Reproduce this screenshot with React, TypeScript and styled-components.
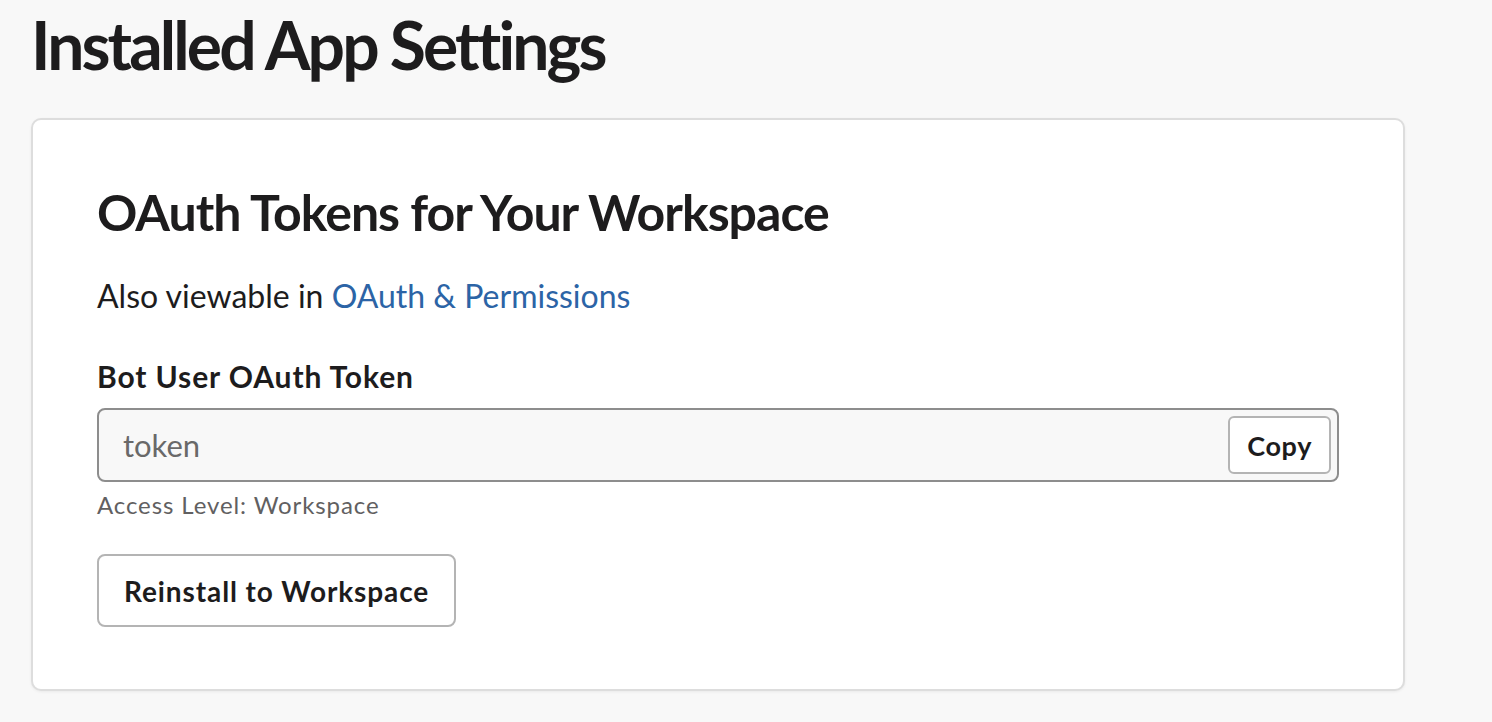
import { FC } from "react";
import styled, { createGlobalStyle } from "styled-components";

const GlobalStyle = createGlobalStyle`
  html, body {
    margin: 0;
    padding: 0;
    background: #f8f8f8;
    font-family: Lato, "Noto Sans", sans-serif;
    color: #1d1c1d;
  }
  * {
    box-sizing: border-box;
  }
`;

/**
 * Settings page with the workspace token card
 */
const App: FC = () => {
  return (
    <>
      <GlobalStyle />
      <Page>
        <Title>Installed App Settings</Title>
        <Card>
          <CardTitle>OAuth Tokens for Your Workspace</CardTitle>
          <Lead>
            Also viewable in <Link href="#">OAuth &amp; Permissions</Link>
          </Lead>
          <Label>Bot User OAuth Token</Label>
          <TokenField>
            <TokenInput placeholder="token" readOnly />
            <CopyButton>Copy</CopyButton>
          </TokenField>
          <Hint>Access Level: Workspace</Hint>
          <Button>Reinstall to Workspace</Button>
        </Card>
      </Page>
    </>
  );
};

export default App;

const Page = styled.div`
  padding: 5px 87px 32px 31px;
`;

const Title = styled.h1`
  margin: 0 0 33px;
  font-size: 66px;
  line-height: 80px;
  font-weight: 700;
  letter-spacing: -2.9px;
`;

const Card = styled.div`
  background: #fff;
  border: 2px solid #dddddd;
  border-radius: 10px;
  box-shadow: 0 1px 3px rgba(0, 0, 0, 0.06);
  padding: 62px 64px;
`;

const CardTitle = styled.h2`
  margin: 0 0 34px;
  font-size: 50px;
  line-height: 60px;
  font-weight: 700;
  letter-spacing: -1px;
`;

const Lead = styled.p`
  margin: 0 0 42px;
  font-size: 32px;
  line-height: 40px;
`;

const Link = styled.a`
  color: #2c64a6;
  text-decoration: none;
`;

const Label = styled.div`
  margin-bottom: 14px;
  font-size: 30px;
  line-height: 36px;
  font-weight: 700;
  letter-spacing: 0.9px;
`;

const TokenField = styled.div`
  display: flex;
  align-items: center;
  gap: 8px;
  height: 74px;
  padding: 0 6px 0 24px;
  background: #f8f8f8;
  border: 2px solid #8d8d8d;
  border-radius: 8px;
`;

const TokenInput = styled.input`
  flex: 1;
  min-width: 0;
  border: none;
  outline: none;
  background: transparent;
  font-family: inherit;
  font-size: 31px;
  color: #1d1c1d;
  padding: 0;

  &::placeholder {
    color: #696969;
  }
`;

const CopyButton = styled.button`
  height: 58px;
  padding: 0 17px;
  background: #fff;
  border: 2px solid #b4b4b4;
  border-radius: 6px;
  font-family: inherit;
  font-size: 27px;
  font-weight: 700;
  letter-spacing: 0.6px;
  color: #1d1c1d;
  cursor: pointer;
`;

const Hint = styled.div`
  margin: 8px 0 34px;
  font-size: 24px;
  line-height: 30px;
  letter-spacing: 0.9px;
  color: #616061;
`;

const Button = styled.button`
  display: block;
  height: 73px;
  padding: 0 25px;
  background: #fff;
  border: 2px solid #b4b4b4;
  border-radius: 8px;
  font-family: inherit;
  font-size: 28px;
  font-weight: 700;
  letter-spacing: 0.9px;
  color: #1d1c1d;
  cursor: pointer;
`;
